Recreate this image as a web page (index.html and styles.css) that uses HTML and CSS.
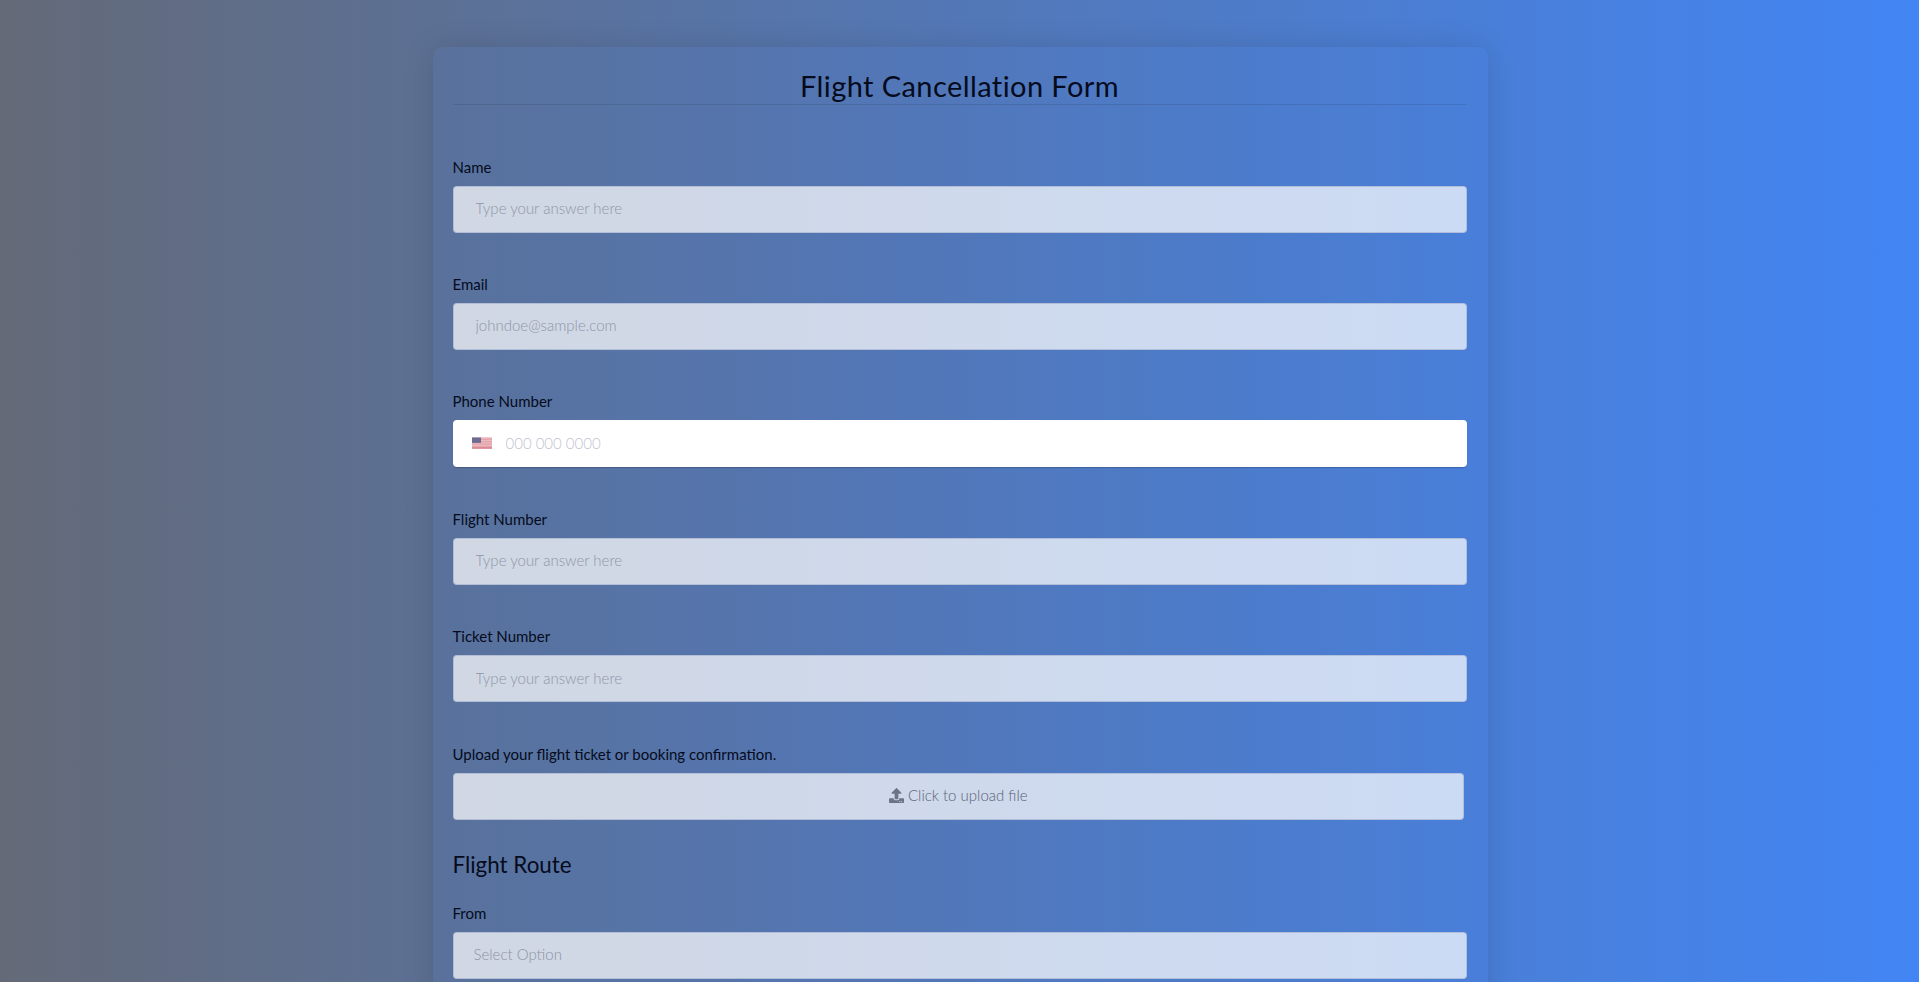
FILE: index.html
```html
<!DOCTYPE html>
<html lang="en">
<head>
    <meta charset="UTF-8">
    <meta name="viewport" content="width=device-width, initial-scale=1.0">
    <title>Flight Cancellation Form</title>
    <link rel="stylesheet" href="styles.css">
</head>
<body>
    <form class="card">
        <h1 class="title">Flight Cancellation Form</h1>

        <div class="field">
            <label class="label" for="name">Name</label>
            <input class="input" id="name" type="text" placeholder="Type your answer here">
        </div>

        <div class="field">
            <label class="label" for="email">Email</label>
            <input class="input" id="email" type="email" placeholder="johndoe@sample.com">
        </div>

        <div class="field">
            <label class="label" for="phone">Phone Number</label>
            <div class="phone">
                <svg class="flag" viewBox="0 0 20 11" aria-hidden="true">
                    <rect width="20" height="11" fill="#e39aa3"/>
                    <path d="M0 1.3h20M0 3h20M0 4.7h20M0 6.4h20M0 8.1h20M0 9.8h20" stroke="#eec6cb" stroke-width=".8"/>
                    <rect y="10" width="20" height="1" fill="#c9626e"/>
                    <rect width="9" height="5.4" fill="#6c6c92"/>
                </svg>
                <input class="phone-input" id="phone" type="tel" placeholder="000 000 0000">
            </div>
        </div>

        <div class="field">
            <label class="label" for="flight">Flight Number</label>
            <input class="input" id="flight" type="text" placeholder="Type your answer here">
        </div>

        <div class="field">
            <label class="label" for="ticket">Ticket Number</label>
            <input class="input" id="ticket" type="text" placeholder="Type your answer here">
        </div>

        <div class="field field-upload">
            <span class="label">Upload your flight ticket or booking confirmation.</span>
            <label class="upload">
                <svg class="upload-icon" viewBox="0 0 512 512" aria-hidden="true">
                    <path d="M296 384h-80c-13.3 0-24-10.7-24-24V192h-87.7c-17.8 0-26.7-21.5-14.1-34.1L242.3 5.7c7.5-7.5 19.8-7.5 27.3 0l152.2 152.2c12.6 12.6 3.7 34.1-14.1 34.1H320v168c0 13.3-10.7 24-24 24zm216-8v112c0 13.3-10.7 24-24 24H24c-13.3 0-24-10.7-24-24V376c0-13.3 10.7-24 24-24h136v8c0 30.9 25.1 56 56 56h80c30.9 0 56-25.1 56-56v-8h136c13.3 0 24 10.7 24 24zm-124 88c0-11-9-20-20-20s-20 9-20 20 9 20 20 20 20-9 20-20zm64 0c0-11-9-20-20-20s-20 9-20 20 9 20 20 20 20-9 20-20z"/>
                </svg>
                Click to upload file
            </label>
        </div>

        <h2 class="section">Flight Route</h2>

        <div class="field">
            <label class="label" for="from">From</label>
            <select class="input select" id="from">
                <option>Select Option</option>
            </select>
        </div>
    </form>
</body>
</html>
```

FILE: styles.css
```css
* {
    box-sizing: border-box;
}

html,
body {
    height: 100%;
    overflow: hidden;
}

body {
    margin: 0;
    padding: 47px 0 0 1px;
    font-family: Lato, "Open Sans", sans-serif;
    color: #050b1c;
    background: linear-gradient(to right, #646a78, #4285f4);
}

.card {
    width: 1055px;
    margin: 0 auto;
    padding: 22px 21px 40px 20px;
    border-radius: 10px;
    background: rgba(66, 133, 244, 0.08);
    box-shadow: 0 0 30px rgba(0, 0, 0, 0.12);
}

.title {
    margin: 0 0 52.6px;
    height: 36px;
    border-bottom: 1px solid rgba(0, 0, 0, 0.1);
    font-size: 29px;
    line-height: 33px;
    font-weight: 400;
    text-align: center;
    letter-spacing: 0.42px;
}

.field {
    margin-bottom: 42.4px;
}

.field-upload {
    margin-bottom: 31px;
}

.label {
    display: block;
    margin-bottom: 10px;
    font-size: 15px;
    line-height: 18px;
}

.input {
    display: block;
    width: 100%;
    height: 47px;
    padding: 0 22px 2px;
    border: 1px solid rgba(170, 182, 210, 0.75);
    border-radius: 4px;
    font-family: inherit;
    font-size: 15px;
    background: rgba(255, 255, 255, 0.72);
    outline: none;
}

.input::placeholder,
.phone-input::placeholder {
    color: #8f95a7;
    font-weight: 300;
    opacity: 1;
}

.select {
    padding-left: 20px;
    appearance: none;
    color: #8d93a3;
    font-weight: 300;
}

.phone {
    display: flex;
    align-items: center;
    gap: 14px;
    height: 47px;
    padding: 0 19px 1px;
    border-radius: 4px;
    background: #ffffff;
    box-shadow: 0 1px 1px rgba(0, 0, 0, 0.2);
}

.flag {
    width: 20px;
    height: 12px;
    flex-shrink: 0;
}

.phone-input {
    flex: 1;
    border: 0;
    padding: 0 0 1px;
    font-family: inherit;
    font-size: 15px;
    outline: none;
    background: transparent;
}

.phone-input::placeholder {
    color: #bfc3d0;
}

.upload {
    display: flex;
    align-items: center;
    justify-content: center;
    gap: 4px;
    width: 1011.5px;
    height: 47px;
    padding-bottom: 2px;
    border: 1px solid rgba(170, 182, 210, 0.75);
    border-radius: 4px;
    font-size: 15px;
    font-weight: 300;
    color: #5a6172;
    background: rgba(255, 255, 255, 0.72);
}

.upload-icon {
    width: 15px;
    height: 15px;
    fill: #6b7488;
}

.section {
    margin: 0 0 25px;
    font-size: 22.4px;
    line-height: 28px;
    font-weight: 400;
}
```
